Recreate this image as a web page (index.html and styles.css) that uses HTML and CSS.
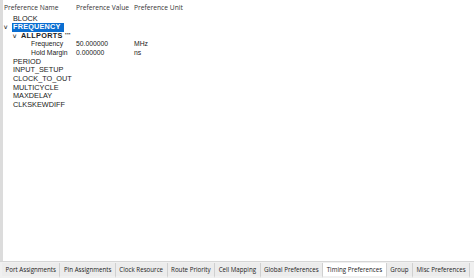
FILE: index.html
```html
<!DOCTYPE html>
<html>
<head>
<meta charset="utf-8">
<link rel="stylesheet" href="styles.css">
</head>
<body>
<div class="app">
  <div class="main">
    <div class="header">
      <div class="hcell c1">Preference Name</div>
      <div class="hcell c2">Preference Value</div>
      <div class="hcell c3">Preference Unit</div>
    </div>
    <div class="tree">
      <div class="row lvl1"><span class="name">BLOCK</span></div>
      <div class="row lvl0"><span class="chev">&#x2228;</span><span class="name sel">FREQUENCY</span></div>
      <div class="row lvl1b"><span class="chev">&#x2228;</span><span class="name bold">ALLPORTS <sup>***</sup></span></div>
      <div class="row leaf"><span class="lname">Frequency</span><span class="val">50.000000</span><span class="unit">MHz</span></div>
      <div class="row leaf"><span class="lname">Hold Margin</span><span class="val">0.000000</span><span class="unit">ns</span></div>
      <div class="row lvl1"><span class="name">PERIOD</span></div>
      <div class="row lvl1"><span class="name">INPUT_SETUP</span></div>
      <div class="row lvl1"><span class="name">CLOCK_TO_OUT</span></div>
      <div class="row lvl1"><span class="name">MULTICYCLE</span></div>
      <div class="row lvl1"><span class="name">MAXDELAY</span></div>
      <div class="row lvl1"><span class="name">CLKSKEWDIFF</span></div>
    </div>
  </div>
  <div class="tabs">
    <div class="tab">Port Assignments</div>
    <div class="tab">Pin Assignments</div>
    <div class="tab">Clock Resource</div>
    <div class="tab">Route Priority</div>
    <div class="tab">Cell Mapping</div>
    <div class="tab">Global Preferences</div>
    <div class="tab active">Timing Preferences</div>
    <div class="tab">Group</div>
    <div class="tab">Misc Preferences</div>
  </div>
</div>
</body>
</html>
```
FILE: styles.css
```css
html, body {
  margin: 0;
  padding: 0;
  background: #ffffff;
}
.app {
  width: 474px;
  height: 278px;
  display: flex;
  flex-direction: column;
  font-family: "Open Sans", "Liberation Sans", sans-serif;
  color: #1a1a1a;
}
.main {
  flex: 1;
  border-left: 3px solid #dcdcdc;
  background: #fff;
  min-height: 0;
}
.header {
  display: grid;
  grid-template-columns: 73px 58px 1fr;
  height: 13px;
  align-items: center;
  font-size: 6.7px;
  color: #333;
  padding-top: 1px;
}
.hcell.c1 { padding-left: 1px; }
.tree {
  font-family: "Liberation Sans", Arial, sans-serif;
  font-size: 7.3px;
  color: #222;
  padding-top: 0.5px;
}
.row {
  height: 8.65px;
  line-height: 8.65px;
  display: flex;
  align-items: center;
  white-space: nowrap;
}
.lvl1 { padding-left: 10px; }
.lvl0 { padding-left: 1px; }
.lvl1b { padding-left: 10px; }
.chev {
  display: inline-block;
  width: 8px;
  font-size: 6px;
  color: #333;
  transform: scaleX(1.2);
}
.sel {
  background: #0a6ed1;
  color: #fff;
  font-weight: bold;
  padding: 0 3px 0 1px;
  letter-spacing: 0.2px;
}
.bold {
  font-weight: bold;
  letter-spacing: 0.3px;
}
.bold sup {
  font-size: 4px;
  vertical-align: 2px;
}
.leaf { padding-left: 28px; font-size: 6.8px; }
.lname { width: 45px; }
.val { width: 58px; }
.tabs {
  height: 16px;
  display: flex;
  align-items: stretch;
  background: #f0f0f0;
  border-top: 1px solid #d6d6d6;
  padding-left: 2px;
  font-size: 6.2px;
  color: #222;
}
.tab {
  display: flex;
  align-items: center;
  padding: 0 3.5px;
  border-right: 1px solid #d0d0d0;
  border-bottom: 2px solid #f0f0f0;
  background: #ececec;
  white-space: nowrap;
  margin-top: 1px;
}
.tab.active {
  background: #fff;
  border-left: 1px solid #d0d0d0;
  margin-left: -1px;
}
```
